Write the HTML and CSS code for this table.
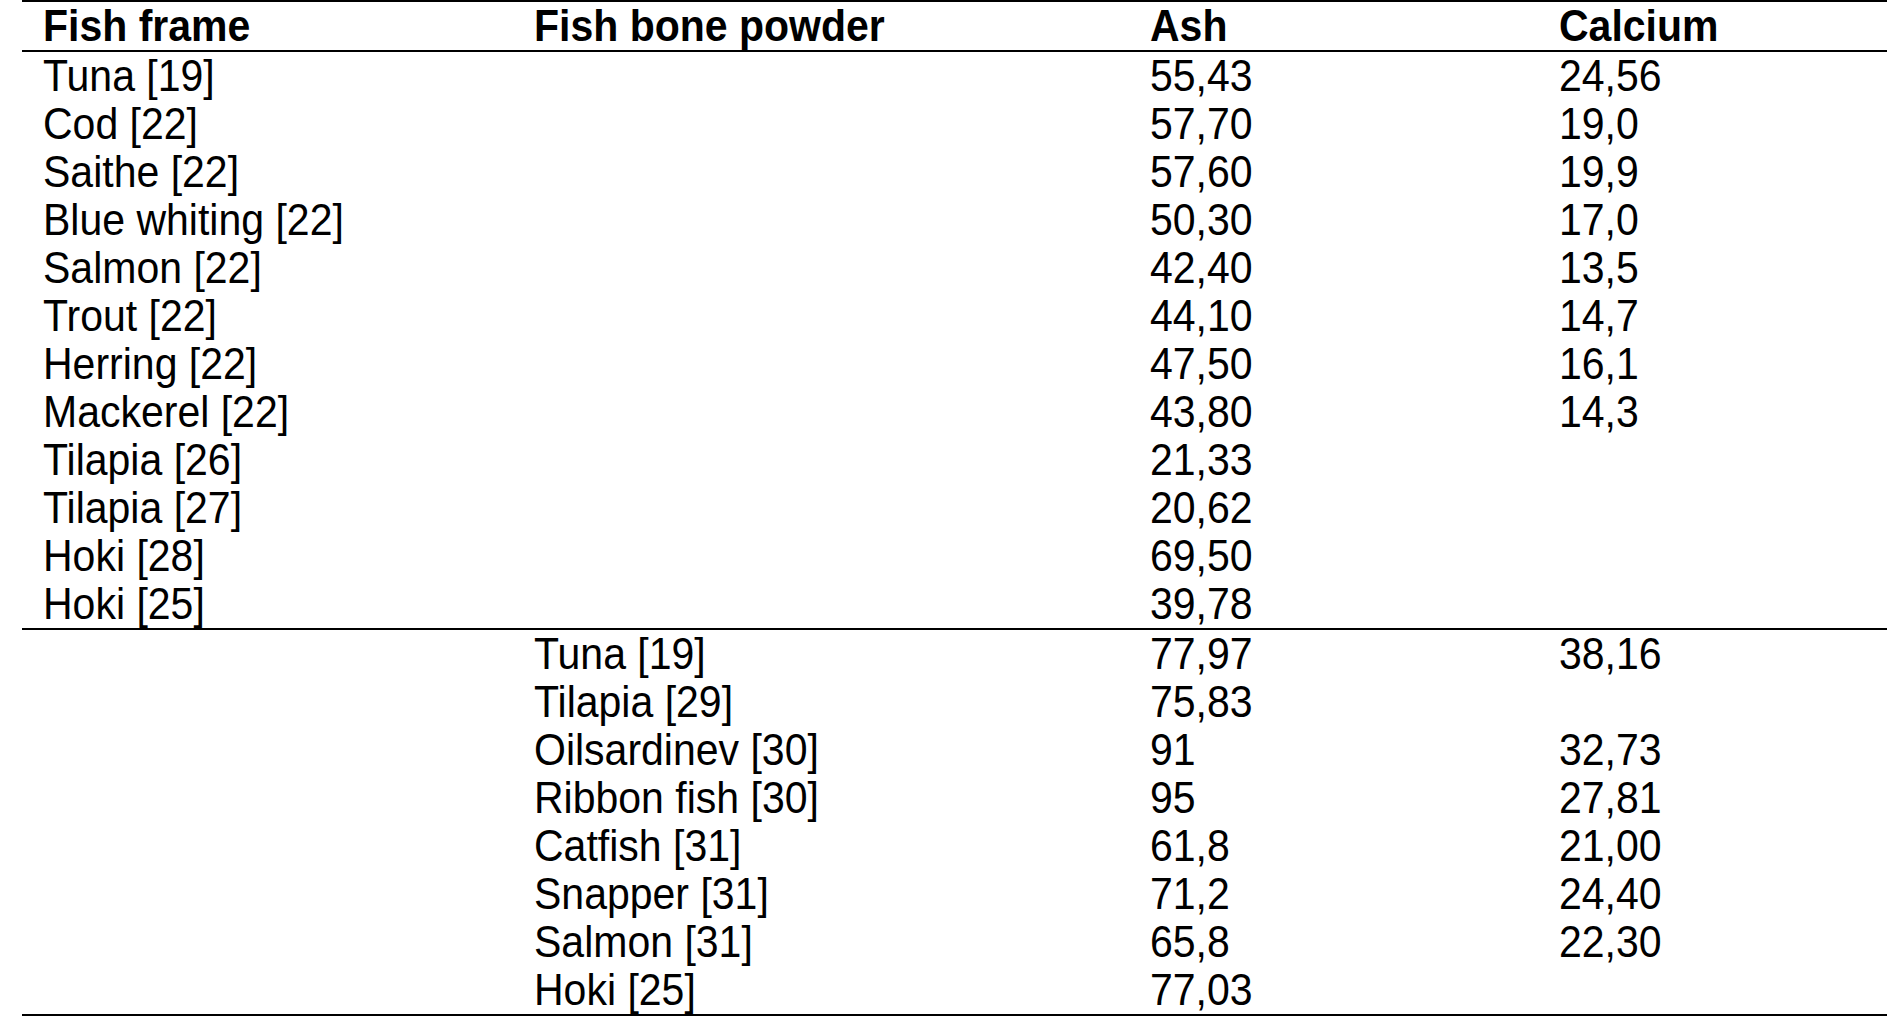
FILE: index.html
```html
<!DOCTYPE html>
<html>
<head>
<meta charset="utf-8">
<link rel="stylesheet" href="styles.css">
</head>
<body>
<div class="table">
  <div class="row head">
    <div class="c1">Fish frame</div><div>Fish bone powder</div><div>Ash</div><div>Calcium</div>
  </div>
  <div class="group">
    <div class="row"><div class="c1">Tuna [19]</div><div></div><div>55,43</div><div>24,56</div></div>
    <div class="row"><div class="c1">Cod [22]</div><div></div><div>57,70</div><div>19,0</div></div>
    <div class="row"><div class="c1">Saithe [22]</div><div></div><div>57,60</div><div>19,9</div></div>
    <div class="row"><div class="c1">Blue whiting [22]</div><div></div><div>50,30</div><div>17,0</div></div>
    <div class="row"><div class="c1">Salmon [22]</div><div></div><div>42,40</div><div>13,5</div></div>
    <div class="row"><div class="c1">Trout [22]</div><div></div><div>44,10</div><div>14,7</div></div>
    <div class="row"><div class="c1">Herring [22]</div><div></div><div>47,50</div><div>16,1</div></div>
    <div class="row"><div class="c1">Mackerel [22]</div><div></div><div>43,80</div><div>14,3</div></div>
    <div class="row"><div class="c1">Tilapia [26]</div><div></div><div>21,33</div><div></div></div>
    <div class="row"><div class="c1">Tilapia [27]</div><div></div><div>20,62</div><div></div></div>
    <div class="row"><div class="c1">Hoki [28]</div><div></div><div>69,50</div><div></div></div>
    <div class="row"><div class="c1">Hoki [25]</div><div></div><div>39,78</div><div></div></div>
  </div>
  <div class="group">
    <div class="row"><div class="c1"></div><div>Tuna [19]</div><div>77,97</div><div>38,16</div></div>
    <div class="row"><div class="c1"></div><div>Tilapia [29]</div><div>75,83</div><div></div></div>
    <div class="row"><div class="c1"></div><div>Oilsardinev [30]</div><div>91</div><div>32,73</div></div>
    <div class="row"><div class="c1"></div><div>Ribbon fish [30]</div><div>95</div><div>27,81</div></div>
    <div class="row"><div class="c1"></div><div>Catfish [31]</div><div>61,8</div><div>21,00</div></div>
    <div class="row"><div class="c1"></div><div>Snapper [31]</div><div>71,2</div><div>24,40</div></div>
    <div class="row"><div class="c1"></div><div>Salmon [31]</div><div>65,8</div><div>22,30</div></div>
    <div class="row"><div class="c1"></div><div>Hoki [25]</div><div>77,03</div><div></div></div>
  </div>
</div>
</body>
</html>
```
FILE: styles.css
```css
html, body {
  margin: 0;
  padding: 0;
  background: #ffffff;
}
body {
  padding: 0 4px 0 22px;
  font-family: "Liberation Sans", Arial, sans-serif;
  color: #000;
}
.table {
  border-top: 2px solid #000;
  border-bottom: 2px solid #000;
}
.group {
  border-top: 2px solid #000;
}
.row {
  display: grid;
  grid-template-columns: 512px 616px 409px 1fr;
  height: 48px;
  line-height: 48px;
  font-size: 41px;
  white-space: nowrap;
}
.row > div {
  transform: scaleY(1.1);
  transform-origin: 50% 55%;
}
.row .c1 {
  padding-left: 21px;
}
.head {
  font-weight: bold;
}
```
